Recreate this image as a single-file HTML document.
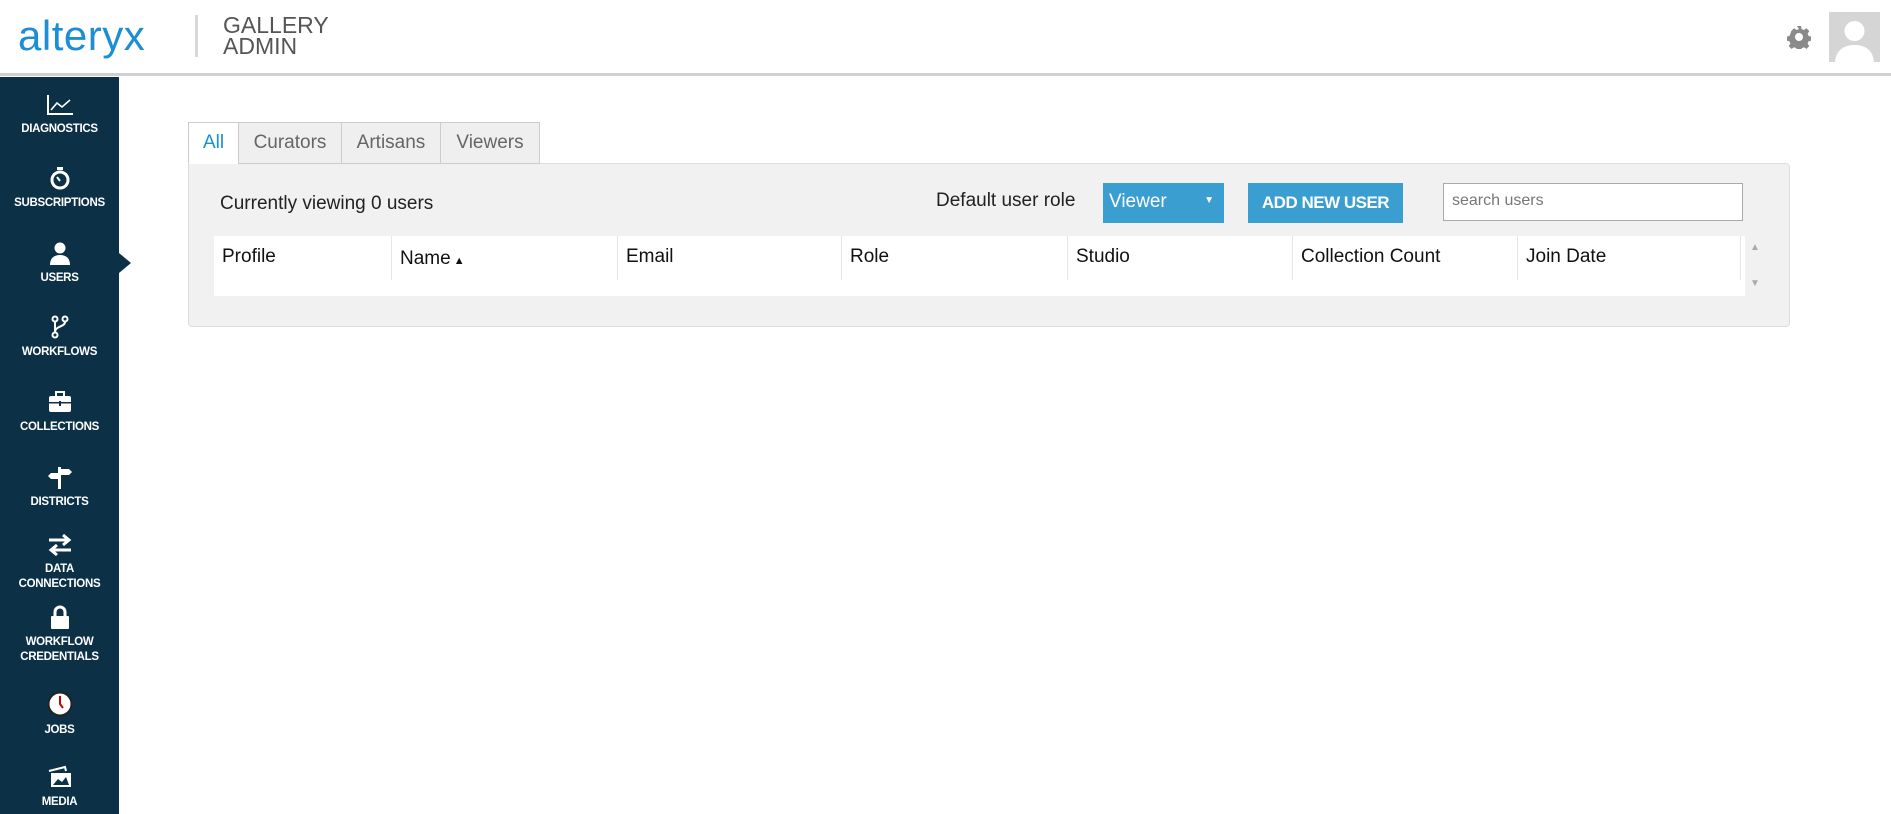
<!DOCTYPE html>
<html><head><meta charset="utf-8"><style>
*{box-sizing:border-box;margin:0;padding:0}
body{width:1891px;height:814px;overflow:hidden;background:#fff;font-family:"Liberation Sans",sans-serif;position:relative}
.hdr{position:absolute;left:0;top:0;width:1891px;height:76px;border-bottom:3px solid #d0d0d0;background:#fff}
.logo{position:absolute;left:18px;top:12px;font-size:42px;color:#1c8ed3;letter-spacing:0.5px}
.div{position:absolute;left:195px;top:15px;width:3px;height:42px;background:#d8d8d8}
.ga{position:absolute;left:223px;top:15px;font-size:23px;line-height:21px;color:#555}
.side{position:absolute;left:0;top:77px;width:119px;height:737px;background:#0c3147}
.it{position:absolute;left:0;width:119px;text-align:center;color:#fff;font-size:11.5px;font-weight:bold;line-height:15px;letter-spacing:-0.3px}
.it svg{display:block;margin:0 auto 6px}
.arrow{position:absolute;left:119px;top:253px;border-left:12px solid #0c3147;border-top:10px solid transparent;border-bottom:10px solid transparent}
.tab{position:absolute;top:122px;height:42px;border:1px solid #ccc;background:#efefef;color:#666;font-size:19px;line-height:40px;text-align:center}
.panel{position:absolute;left:188px;top:163px;width:1602px;height:164px;background:#f1f1f1;border:1px solid #ddd;border-radius:0 4px 4px 4px}
.t{position:absolute;font-size:19px;color:#222}
.th{position:absolute;left:214px;top:236px;width:1531px;height:60px;background:#fff}
.col{position:absolute;top:0;height:44px;border-left:1px solid #e6e6e6;padding:10px 8px;font-size:19px;color:#111}
</style></head><body>
<div class="hdr">
<div class="logo">alteryx</div><div class="div"></div>
<div class="ga">GALLERY<br>ADMIN</div>
<svg style="position:absolute;left:1787px;top:25px" width="24" height="24" viewBox="0 0 24 24"><path fill="#8a8a8a" d="M10 1h4l.6 3 2.3 1 2.6-1.7 2.8 2.8-1.7 2.6 1 2.300 3 .6v4l-3 .6-1 2.3 1.7 2.6-2.8 2.8-2.6-1.7-2.3 1-.6 3h-4l-.6-3-2.3-1-2.6 1.7-2.8-2.8 1.7-2.6-1-2.3-3-.6v-4l3-.6 1-2.3L4.2 6.1 7 3.3l2.6 1.7 2.3-1z"/><circle cx="12" cy="12" r="4" fill="#fff"/></svg>
<div style="position:absolute;left:1829px;top:12px;width:51px;height:50px;background:#d5d5d5;overflow:hidden"><svg width="51" height="50" viewBox="0 0 51 50"><circle cx="25.5" cy="19" r="10" fill="#fff"/><path d="M6 50c1-12 9-17 19.5-17S44 38 45 50z" fill="#fff"/></svg></div>
</div>
<div class="side">
<div class="it" style="top:17px"><svg width="28" height="22" viewBox="0 0 28 22"><path d="M2 1v19h25" stroke="#fff" stroke-width="2" fill="none"/><path d="M5 16l6-7 5 4 8-7" stroke="#fff" stroke-width="1.6" fill="none"/></svg>DIAGNOSTICS</div>
<div class="it" style="top:89px"><svg width="24" height="24" viewBox="0 0 24 24"><circle cx="12" cy="14" r="8" stroke="#fff" stroke-width="3" fill="none"/><rect x="9" y="1" width="6" height="3" fill="#fff"/><path d="M9 11l3 4" stroke="#fff" stroke-width="2"/></svg>SUBSCRIPTIONS</div>
<div class="it" style="top:164px"><svg width="24" height="24" viewBox="0 0 24 24"><circle cx="12" cy="7" r="5.5" fill="#fff"/><path d="M2 24c0-7 4-10 10-10s10 3 10 10z" fill="#fff"/></svg>USERS</div>
<div class="it" style="top:238px"><svg width="20" height="24" viewBox="0 0 20 24"><circle cx="5" cy="4" r="2.5" stroke="#fff" stroke-width="2" fill="none"/><circle cx="15" cy="4" r="2.5" stroke="#fff" stroke-width="2" fill="none"/><circle cx="5" cy="20" r="2.5" stroke="#fff" stroke-width="2" fill="none"/><path d="M5 7v10M15 7c0 5-10 4-10 10" stroke="#fff" stroke-width="2" fill="none"/></svg>WORKFLOWS</div>
<div class="it" style="top:313px"><svg width="26" height="24" viewBox="0 0 26 24"><rect x="2" y="6" width="22" height="16" rx="2" fill="#fff"/><rect x="9" y="2" width="8" height="5" stroke="#fff" stroke-width="2" fill="none"/><rect x="2" y="12" width="22" height="1.5" fill="#0c3147"/><rect x="12" y="11" width="2" height="5" fill="#0c3147"/></svg>COLLECTIONS</div>
<div class="it" style="top:388px"><svg width="26" height="24" viewBox="0 0 26 24"><rect x="11" y="2" width="3" height="22" fill="#fff"/><path d="M14 4h8l3 3-3 3h-8zM11 8H4l-3 3 3 3h7z" fill="#fff"/></svg>DISTRICTS</div>
<div class="it" style="top:457px"><svg width="26" height="22" viewBox="0 0 26 22"><path d="M2 6h18M16 1l6 5-6 5M24 16H6M10 11l-6 5 6 5" stroke="#fff" stroke-width="3" fill="none"/></svg>DATA<br>CONNECTIONS</div>
<div class="it" style="top:528px"><svg width="22" height="24" viewBox="0 0 22 24"><path d="M6 11V7a5 5 0 0110 0v4" stroke="#fff" stroke-width="3" fill="none"/><rect x="2" y="11" width="18" height="13" rx="1" fill="#fff"/></svg>WORKFLOW<br>CREDENTIALS</div>
<div class="it" style="top:614px"><svg width="26" height="26" viewBox="0 0 26 26"><circle cx="13" cy="13" r="11.5" fill="#fff" stroke="#222" stroke-width="2"/><path d="M13 5v8l3 4" stroke="#c00" stroke-width="2" fill="none"/></svg>JOBS</div>
<div class="it" style="top:688px"><svg width="26" height="24" viewBox="0 0 26 24"><path d="M2 6l16-4 1 4" stroke="#fff" stroke-width="2" fill="none"/><rect x="4" y="8" width="20" height="14" fill="#fff"/><path d="M6 20l5-6 4 3 4-5 3 8z" fill="#0c3147"/></svg>MEDIA</div>
</div>
<div class="arrow"></div>
<div class="panel"></div>
<div class="tab" style="left:188px;width:51px;background:#fff;color:#1c8ed3;border-bottom-color:#fff">All</div>
<div class="tab" style="left:238px;width:104px">Curators</div>
<div class="tab" style="left:341px;width:100px">Artisans</div>
<div class="tab" style="left:440px;width:100px">Viewers</div>
<div class="t" style="left:220px;top:193px">Currently viewing 0 users</div>
<div class="t" style="left:936px;top:190px">Default user role</div>
<div style="position:absolute;left:1103px;top:183px;width:121px;height:40px;background:#3b9ed0;color:#fff;font-size:19px;padding:8px 6px">Viewer<span style="position:absolute;right:10px;top:12px;font-size:10px">▼</span></div>
<div style="position:absolute;left:1248px;top:183px;width:155px;height:40px;background:#3b9ed0;color:#fff;font-size:17px;font-weight:bold;text-align:center;line-height:40px;letter-spacing:-0.5px">ADD NEW USER</div>
<div style="position:absolute;left:1443px;top:183px;width:300px;height:38px;background:#fff;border:1px solid #aaa;color:#777;font-size:16px;padding:8px 8px">search users</div>
<div class="th">
<div class="col" style="left:0;border:none">Profile</div>
<div class="col" style="left:177px;padding-top:12px">Name<span style="font-size:11px"> ▲</span></div>
<div class="col" style="left:403px">Email</div>
<div class="col" style="left:627px">Role</div>
<div class="col" style="left:853px">Studio</div>
<div class="col" style="left:1078px">Collection Count</div>
<div class="col" style="left:1303px">Join Date</div>
<div class="col" style="left:1526px;width:5px"></div>
</div>
<div style="position:absolute;left:1745px;top:236px;width:20px;height:60px;background:#f1f1f1;color:#aaa;font-size:10px;text-align:center;line-height:12px;padding-top:6px">▲<br><br><br>▼</div>
</body></html>
